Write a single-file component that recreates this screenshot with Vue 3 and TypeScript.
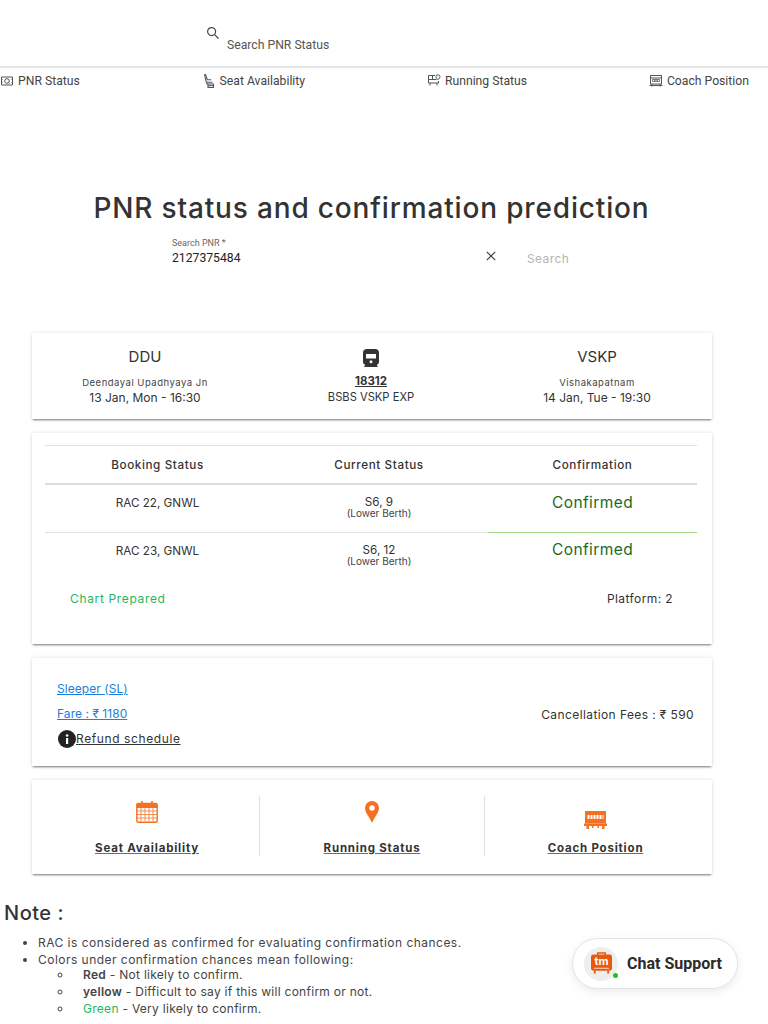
<template>
  <div class="page">
    <header class="search-bar">
      <svg class="search-icon" viewBox="0 0 14 14" width="14" height="14">
        <circle cx="5.6" cy="5.6" r="4" fill="none" stroke="#444" stroke-width="1.2" />
        <path d="M8.6 8.6l4 4" stroke="#444" stroke-width="1.3" fill="none" />
      </svg>
      <span class="search-text">Search PNR Status</span>
    </header>

    <nav class="tabs">
      <a class="tab">
        <svg viewBox="0 0 14 12" width="14" height="12" fill="none" stroke="#555" stroke-width="1">
          <path d="M1.500 2h11v8h-11z" />
          <path d="M1 4.500h1.500M1 7.500h1.500M11.500 4.500H13M11.500 7.500H13" />
          <circle cx="7" cy="6" r="2.300" />
          <path d="M8.500 7.500l1 1" />
        </svg>
        PNR Status
      </a>
      <a class="tab">
        <svg viewBox="0 0 14 14" width="14" height="14" fill="none" stroke="#555" stroke-width="1.100">
          <path d="M2.500.5l1.800 7.800h6.200" />
          <path d="M2.500.5h1l1.800 5.300h4" />
          <path d="M5 8.300v1.700h6.500v3.500H6V10" />
          <path d="M6 11.700h5.500" />
        </svg>
        Seat Availability
      </a>
      <a class="tab">
        <svg viewBox="0 0 14 13" width="14" height="13" fill="none" stroke="#555" stroke-width="1">
          <path d="M8 1.500H1.500v7.500h10V7" />
          <path d="M1.500 5.500h8M5.500 1.500v4M3 9v2.500M10 9v2.500" />
          <path d="M11 .8a2 2 0 0 1 2 2c0 1.400-2 3-2 3s-2-1.600-2-3a2 2 0 0 1 2-2z" />
        </svg>
        Running Status
      </a>
      <a class="tab">
        <svg viewBox="0 0 14 12" width="14" height="12" fill="none" stroke="#555" stroke-width="1">
          <rect x="1.500" y=".5" width="11" height="8.500" />
          <path d="M1.500 3h11" />
          <path d="M3.500 4.500h2v2h-2zM6 4.500h2v2H6zM8.500 4.500h2v2h-2z" stroke-width=".8" />
          <path d="M.5 10.500h13M3 9v2.500M11 9v2.500" />
        </svg>
        Coach Position
      </a>
    </nav>

    <h1 class="title">PNR status and confirmation prediction</h1>

    <form class="pnr-form" @submit.prevent>
      <div class="field">
        <label>Search PNR *</label>
        <span class="value">{{ pnr }}</span>
      </div>
      <svg class="clear" viewBox="0 0 10 10" width="10" height="10">
        <path d="M.8.8l8.400 8.400M9.200.8L.8 9.200" stroke="#333" stroke-width="1.100" fill="none" />
      </svg>
      <span class="search-btn">Search</span>
    </form>

    <section class="card journey">
      <div class="station">
        <div class="code">DDU</div>
        <div class="name">Deendayal Upadhyaya Jn</div>
        <div class="time">13 Jan, Mon - 16:30</div>
      </div>
      <div class="station">
        <svg class="train" viewBox="0 0 16 18" width="16" height="18">
          <path
            fill="#333"
            fill-rule="evenodd"
            d="M4 0h8a4 4 0 0 1 4 4v9a3 3 0 0 1-2.200 2.900L15 18H1l1.200-2.100A3 3 0 0 1 0 13V4a4 4 0 0 1 4-4zM3 5v4.500h10V5zm5 6.300a1.500 1.500 0 1 0 0 3 1.500 1.500 0 0 0 0-3z"
          />
        </svg>
        <a class="number">18312</a>
        <div class="time train-name">BSBS VSKP EXP</div>
      </div>
      <div class="station">
        <div class="code">VSKP</div>
        <div class="name">Vishakapatnam</div>
        <div class="time">14 Jan, Tue - 19:30</div>
      </div>
    </section>

    <section class="card status">
      <table>
        <thead>
          <tr>
            <th>Booking Status</th>
            <th>Current Status</th>
            <th>Confirmation</th>
          </tr>
        </thead>
        <tbody>
          <tr v-for="p in passengers" :key="p.booking">
            <td>{{ p.booking }}</td>
            <td class="seat">{{ p.seat }}<small>(Lower Berth)</small></td>
            <td class="confirm">Confirmed</td>
          </tr>
        </tbody>
      </table>
      <div class="status-foot">
        <span class="chart">Chart Prepared</span>
        <span>Platform: 2</span>
      </div>
    </section>

    <section class="card fare">
      <div class="fare-left">
        <a class="blue">Sleeper (SL)</a>
        <a class="blue">Fare : ₹ 1180</a>
        <div class="refund">
          <svg viewBox="0 0 18 18" width="18" height="18">
            <circle cx="9" cy="9" r="9" fill="#222" />
            <rect x="8" y="8" width="2.200" height="6" fill="#fff" />
            <circle cx="9.100" cy="5.500" r="1.300" fill="#fff" />
          </svg>
          <a>Refund schedule</a>
        </div>
      </div>
      <div class="cancel">Cancellation Fees : ₹ 590</div>
    </section>

    <section class="card links">
      <div class="link-col">
        <svg class="link-icon" viewBox="0 0 22 22" width="22" height="22" fill="none" stroke="#f47023">
          <rect x=".8" y="2.500" width="20.400" height="18.700" rx="1.500" stroke-width="1.400" />
          <path d="M1 3h20v3.500H1z" fill="#f47023" />
          <path d="M6 0v3.500M16 0v3.500" stroke-width="1.600" />
          <path d="M1 10h20M1 13.500h20M1 17h20M5 6.500v14M9 6.500v14M13 6.500v14M17 6.500v14" stroke-width="1" opacity=".75" />
        </svg>
        <a>Seat Availability</a>
      </div>
      <div class="link-col">
        <svg class="link-icon" viewBox="0 0 14 22" width="14" height="22">
          <path
            fill="#f47023"
            fill-rule="evenodd"
            d="M7 0a7 7 0 0 1 7 7c0 4.500-4.500 9-7 15C4.500 16 0 11.500 0 7a7 7 0 0 1 7-7zm0 4.300a2.700 2.700 0 1 0 0 5.400 2.700 2.700 0 0 0 0-5.400z"
          />
        </svg>
        <a>Running Status</a>
      </div>
      <div class="link-col">
        <svg class="link-icon coach" viewBox="0 0 23 18" width="23" height="18">
          <path fill="#f47023" fill-rule="evenodd" d="M1 0h21v12.500H1zM3.500 4v4h16V4z" />
          <path fill="#f47023" d="M0 12.500h23V15H0zM2.500 15h2.500v3H2.500zM18 15h2.500v3H18zM8 15h1.500v2H8zM13.500 15H15v2h-1.500z" />
          <path stroke="#f47023" stroke-width="1" d="M6 4v4M9 4v4M12 4v4M15 4v4M18 4v4" />
        </svg>
        <a>Coach Position</a>
      </div>
    </section>

    <section class="note">
      <h2>Note :</h2>
      <ul>
        <li>RAC is considered as confirmed for evaluating confirmation chances.</li>
        <li>
          Colors under confirmation chances mean following:
          <ul>
            <li><b>Red</b> - Not likely to confirm.</li>
            <li><b>yellow</b> - Difficult to say if this will confirm or not.</li>
            <li><span class="green">Green</span> - Very likely to confirm.</li>
          </ul>
        </li>
      </ul>
    </section>

    <div class="chat">
      <span class="avatar">
        <svg viewBox="0 0 22 24" width="21" height="23">
          <path d="M7 3V1h8v2" fill="none" stroke="#e8590c" stroke-width="1.500" />
          <rect y="2.500" width="22" height="17" rx="2.500" fill="#e8590c" />
          <path d="M4 19.500v3M18 19.500v3" stroke="#e8590c" stroke-width="2" />
          <path d="M3 17h16" stroke="#fff" stroke-width=".8" />
          <text x="11" y="14" text-anchor="middle" fill="#fff" font-size="11.500" font-weight="700">tm</text>
        </svg>
        <i class="online"></i>
      </span>
      Chat Support
    </div>
  </div>
</template>

<script setup lang="ts">
const pnr = "2127375484";

const passengers = [
  { booking: "RAC 22, GNWL", seat: "S6, 9" },
  { booking: "RAC 23, GNWL", seat: "S6, 12" },
];
</script>

<style>
html,
body {
  margin: 0;
  background: #fff;
}
</style>

<style scoped>
.page {
  position: relative;
  width: 768px;
  height: 1024px;
  overflow: hidden;
  font-family: Inter, "Open Sans", sans-serif;
  color: #333;
  background: #fff;
}

.search-bar {
  display: flex;
  box-sizing: border-box;
  height: 68px;
  padding-left: 206px;
  border-bottom: 2px solid #e6e6e6;
  font-family: Roboto, sans-serif;
}

.search-icon {
  margin-top: 26px;
}

.search-text {
  margin: 37px 0 0 7px;
  font-size: 12.200px;
  line-height: 16px;
  color: #555;
}

.tabs {
  display: flex;
  justify-content: space-between;
  padding-right: 19px;
  height: 25px;
  align-items: center;
  font-family: Roboto, sans-serif;
  font-size: 12.200px;
  color: #444;
}

.tab {
  display: flex;
  align-items: center;
  gap: 4px;
}

.title {
  margin: 98px 0 0;
  padding-right: 25px;
  font-size: 28px;
  line-height: 34px;
  font-weight: 500;
  letter-spacing: 0.84px;
  text-align: center;
  color: #333;
}

.pnr-form {
  display: flex;
  height: 73px;
  margin: 10px 0 0 172px;
}

.field {
  display: flex;
  flex-direction: column;
  width: 314px;
  font-family: Roboto, sans-serif;
}

.field label {
  font-size: 9px;
  line-height: 11px;
  color: #666;
  margin-top: 3px;
}

.value {
  margin-top: 2px;
  font-size: 12.200px;
  line-height: 15px;
  color: #222;
}

.clear {
  margin: 16px 0 0 0;
}

.search-btn {
  margin: 16px 0 0 31px;
  font-size: 12px;
  letter-spacing: 0.4px;
  line-height: 16px;
  color: #b5b5b5;
}

.card {
  box-sizing: border-box;
  width: 680px;
  margin: 14px 0 0 32px;
  background: #fff;
  box-shadow: 0 2px 2px -1px rgba(0, 0, 0, 0.5), 0 0 4px rgba(0, 0, 0, 0.12);
}

.journey {
  display: grid;
  grid-template-columns: repeat(3, 226px);
  height: 86px;
  margin-top: 25px;
  text-align: center;
}

.station {
  display: flex;
  flex-direction: column;
  align-items: center;
  padding-top: 14px;
}

.code {
  font-size: 15px;
  line-height: 20px;
  color: #333;
}

.name {
  margin-top: 10px;
  font-size: 9.500px;
  letter-spacing: 0.5px;
  line-height: 12px;
  color: #444;
}

.time {
  margin-top: 1px;
  font-size: 12px;
  line-height: 15px;
  color: #333;
}

.train {
  margin-top: 2px;
}

.number {
  margin-top: 7px;
  font-size: 11.500px;
  line-height: 14px;
  font-weight: 700;
  color: #333;
  text-decoration: underline;
}

.train-name {
  margin-top: 2px;
  font-size: 11.200px;
}

.status {
  height: 211px;
  padding: 12px 15px 0 13px;
}

table {
  width: 652px;
  border-collapse: collapse;
  table-layout: fixed;
  text-align: center;
  font-size: 11.700px;
  color: #333;
}

th:nth-child(1),
td:nth-child(1) {
  width: 225px;
}

th:nth-child(2),
td:nth-child(2) {
  width: 218px;
}

th {
  height: 37px;
  padding: 0;
  font-weight: 500;
  letter-spacing: 0.6px;
  border-top: 1px solid #e2e2e2;
  border-bottom: 2px solid #dcdcdc;
}

td {
  height: 48px;
  padding: 9px 0 0;
  box-sizing: border-box;
  vertical-align: top;
  line-height: 18px;
}

tbody tr:first-child td {
  border-bottom: 1px solid #e0e0e0;
}

tbody tr:first-child td.confirm {
  padding-top: 9px;
  border-bottom-color: #a5d68a;
}

td.seat {
  padding-top: 11px;
  line-height: 12px;
}

.seat small {
  display: block;
  font-size: 10px;
  line-height: 10px;
  color: #444;
}

td.confirm {
  padding-top: 8px;
  font-size: 15.500px;
  letter-spacing: 0.4px;
  color: #1b6b1f;
}

.status-foot {
  display: flex;
  justify-content: space-between;
  padding: 10px 24px 10px 25px;
  font-size: 12px;
  letter-spacing: 0.4px;
  line-height: 18px;
  color: #333;
}

.chart {
  color: #1eb75f;
  letter-spacing: 0.65px;
}

.fare {
  display: flex;
  justify-content: space-between;
  align-items: center;
  height: 108px;
  padding: 0 18px 0 25px;
}

.fare-left {
  display: flex;
  flex-direction: column;
  align-items: flex-start;
  font-size: 12px;
  gap: 8px;
  margin-top: 3px;
}

.blue {
  color: #1a7fe0;
  text-decoration: underline;
  line-height: 17px;
  letter-spacing: 0.05px;
}

.refund {
  display: flex;
  align-items: center;
  margin-left: 1px;
  color: #333;
  letter-spacing: 0.6px;
  text-decoration: underline;
}

.cancel {
  margin-top: 4px;
  font-size: 12px;
  letter-spacing: 0.4px;
  color: #333;
}

.links {
  display: grid;
  grid-template-columns: 224px 225px 222px;
  height: 94px;
  padding-left: 3px;
  text-align: center;
}

.link-col {
  display: flex;
  flex-direction: column;
  align-items: center;
  height: 60px;
  margin-top: 16px;
  border-left: 1px solid #e0e0e0;
  font-size: 11.500px;
  font-weight: 700;
  letter-spacing: 0.8px;
  color: #333;
}

.link-col:first-child {
  border-left: 0;
}

.link-icon {
  margin-top: 5px;
}

.link-icon.coach {
  margin-top: 15px;
}

.link-col a {
  margin-top: auto;
  margin-bottom: 1px;
  text-decoration: underline;
  text-decoration-color: #1a7fe0;
}

.note {
  margin-top: 26px;
  padding-left: 4px;
  font-size: 12px;
  letter-spacing: 0.47px;
  color: #444;
}

.note h2 {
  margin: 0 0 8px;
  font-size: 20px;
  line-height: 26px;
  font-weight: 500;
  letter-spacing: 0.5px;
  color: #333;
}

.note ul {
  margin: 0;
  padding-left: 34px;
  line-height: 17px;
}

.note ul ul {
  margin-top: -2px;
  padding-left: 35px;
  letter-spacing: 0.28px;
}

.note ul ul li {
  padding-left: 10px;
}

.note b {
  font-weight: 600;
}

.green {
  color: #1eb75f;
}

.chat {
  position: absolute;
  left: 572px;
  top: 938px;
  display: flex;
  align-items: center;
  box-sizing: border-box;
  width: 166px;
  height: 51px;
  padding-left: 11px;
  gap: 9px;
  border: 1px solid #e4e4e4;
  border-radius: 26px;
  background: #fff;
  box-shadow: 0 3px 10px rgba(0, 0, 0, 0.08);
  font-family: Roboto, sans-serif;
  font-size: 16px;
  font-weight: 700;
  color: #2b2b2b;
}

.avatar {
  position: relative;
  display: flex;
  align-items: center;
  justify-content: center;
  width: 34px;
  height: 34px;
  border-radius: 50%;
  background: #eee;
}

.avatar text {
  font-family: Inter, sans-serif;
}

.online {
  position: absolute;
  right: 0;
  bottom: 3px;
  width: 5px;
  height: 5px;
  border-radius: 50%;
  background: #1cc71c;
}
</style>
